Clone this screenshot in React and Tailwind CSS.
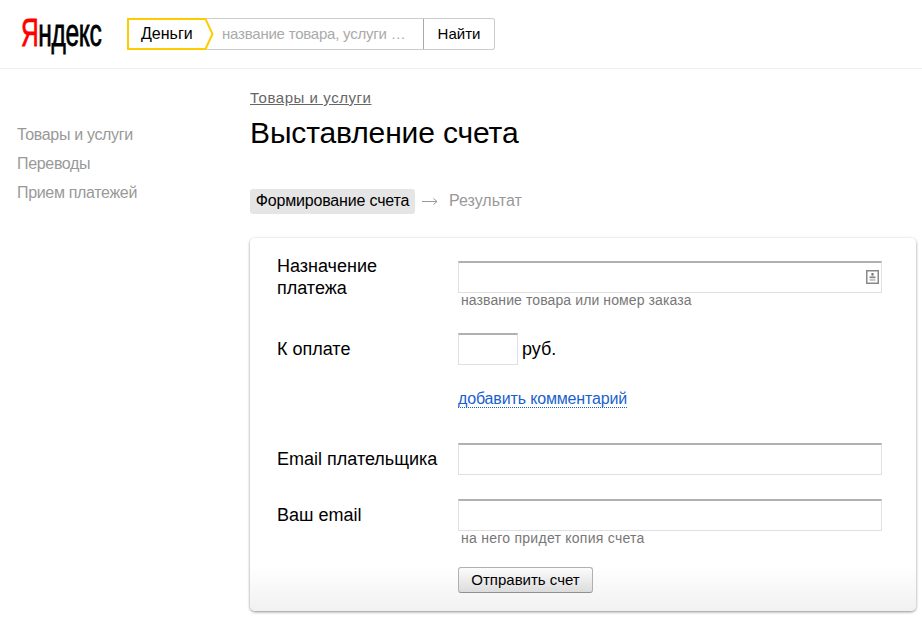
export default function App() {
    return (
        <div className="min-h-screen bg-white font-['Liberation_Sans',Arial,sans-serif] text-black overflow-hidden">
            {/* Header */}
            <header className="h-[69px] border-b border-[#eeeeee] flex items-start pt-[18px] pl-[21px]">
                <div className="w-[106px] h-[32px] leading-[30px] text-[39px] [-webkit-text-stroke:0.8px] tracking-[-0.6px] origin-left scale-x-[0.63] whitespace-nowrap">
                    <span className="text-[#ff0000]">Я</span>ндекс
                </div>
                <div className="flex h-[32px] w-[368px] text-[15px]">
                    <div className="relative w-[79px] shrink-0 border-2 border-r-0 border-[#ffcc00] flex items-center pl-[12px] z-10 bg-white text-[16px]">
                        Деньги
                        <svg className="absolute left-[75px] top-[-2px]" width="10" height="32" viewBox="0 0 10 32">
                            <path d="M0 1 H1.5 L8.5 16 L1.5 31 H0" fill="#fff" stroke="#ffcc00" strokeWidth="2" />
                        </svg>
                    </div>
                    <div className="flex-1 border-y border-[#cccccc] flex items-center pl-[16px] text-[#aaaaaa] whitespace-nowrap tracking-[-0.22px]">
                        название товара, услуги …
                    </div>
                    <div className="w-[72px] shrink-0 border border-[#cccccc] border-l-[#aaaaaa] rounded-r-[3px] flex items-center justify-center">
                        Найти
                    </div>
                </div>
            </header>

            <div className="flex">
                {/* Sidebar */}
                <aside className="w-[250px] shrink-0 pl-[17px] pt-[51px] text-[16px] tracking-[-0.33px] text-[#999999] leading-[29px]">
                    <div>Товары и услуги</div>
                    <div>Переводы</div>
                    <div>Прием платежей</div>
                </aside>

                {/* Main Content */}
                <main className="w-[666px] shrink-0">
                    <a className="block mt-[20px] text-[15px] leading-[18px] text-[#666666] underline tracking-[0.55px]">Товары и услуги</a>
                    <h1 className="mt-[8px] text-[30px] leading-[36px] tracking-[-0.12px]">Выставление счета</h1>

                    <div className="mt-[38px] flex items-center h-[25px] text-[16px]">
                        <span className="h-[25px] w-[165px] rounded-[3px] bg-[#e5e5e5] flex items-center justify-center pb-[2px] tracking-[-0.17px]">Формирование счета</span>
                        <span className="ml-[7px] w-[27px]">
                            <svg width="16" height="9" viewBox="0 0 16 9" fill="none" stroke="#999999"><path d="M0 4.5 H15 M11.5 1.5 L15 4.5 L11.5 7.5" /></svg>
                        </span>
                        <span className="text-[#999999] pb-[2px]">Результат</span>
                    </div>

                    <section className="mt-[24px] h-[373px] rounded-[5px] bg-gradient-to-b from-white from-[88%] to-[#f1f1f1] shadow-[0_1px_3px_rgba(0,0,0,0.45)] pl-[27px] pt-[17px] text-[18px]">
                        {/* Назначение платежа */}
                        <div className="flex">
                            <div className="w-[181px] shrink-0 leading-[22px]">Назначение<br />платежа</div>
                            <div className="pt-[6px]">
                                <div className="w-[424px] h-[32px] border border-[#e0e0e0] border-t-2 border-t-[#b0b0b0] flex items-center justify-end pr-[2px]">
                                    <svg width="13" height="14" viewBox="0 0 13 14" className="mt-[-1px]">
                                        <rect x="0.75" y="0.75" width="11.5" height="12.5" fill="#fff" stroke="#888" strokeWidth="1.5" />
                                        <rect x="5.4" y="3" width="2.2" height="2.6" fill="#777" />
                                        <rect x="3.5" y="6.4" width="6" height="1.8" fill="#888" />
                                        <rect x="3.5" y="9.2" width="6" height="1.6" fill="#bbb" />
                                    </svg>
                                </div>
                                <div className="pl-[3px] text-[14px] tracking-[0.1px] leading-[15px] text-[#777777]">название товара или номер заказа</div>
                            </div>
                        </div>

                        {/* К оплате */}
                        <div className="flex mt-[25px]">
                            <div className="w-[181px] shrink-0 leading-[32px]">К оплате</div>
                            <div className="flex items-center">
                                <div className="w-[60px] h-[32px] border border-[#e0e0e0] border-t-2 border-t-[#b0b0b0]"></div>
                                <span className="ml-[4px]">руб.</span>
                            </div>
                        </div>

                        <div className="ml-[181px] mt-[24px] leading-[20px] text-[16px] tracking-[-0.15px]">
                            <a className="text-[#1a5fd0] border-b border-dotted border-[#1a5fd0]">добавить комментарий</a>
                        </div>

                        {/* Email плательщика */}
                        <div className="flex mt-[34px]">
                            <div className="w-[181px] shrink-0 leading-[32px]">Email плательщика</div>
                            <div className="w-[424px] h-[32px] border border-[#e0e0e0] border-t-2 border-t-[#b0b0b0]"></div>
                        </div>

                        {/* Ваш email */}
                        <div className="flex mt-[24px]">
                            <div className="w-[181px] shrink-0 leading-[32px]">Ваш email</div>
                            <div>
                                <div className="w-[424px] h-[32px] border border-[#e0e0e0] border-t-2 border-t-[#b0b0b0]"></div>
                                <div className="pl-[3px] text-[14px] tracking-[0.26px] leading-[14px] text-[#777777]">на него придет копия счета</div>
                                <button className="mt-[22px] w-[135px] h-[26px] rounded-[3px] border border-[#b0b0b0] border-b-[#909090] bg-gradient-to-b from-[#fcfcfc] to-[#dcdcdc] text-[15px] flex items-center justify-center">Отправить счет</button>
                            </div>
                        </div>
                    </section>
                </main>
            </div>
        </div>
    );
}
